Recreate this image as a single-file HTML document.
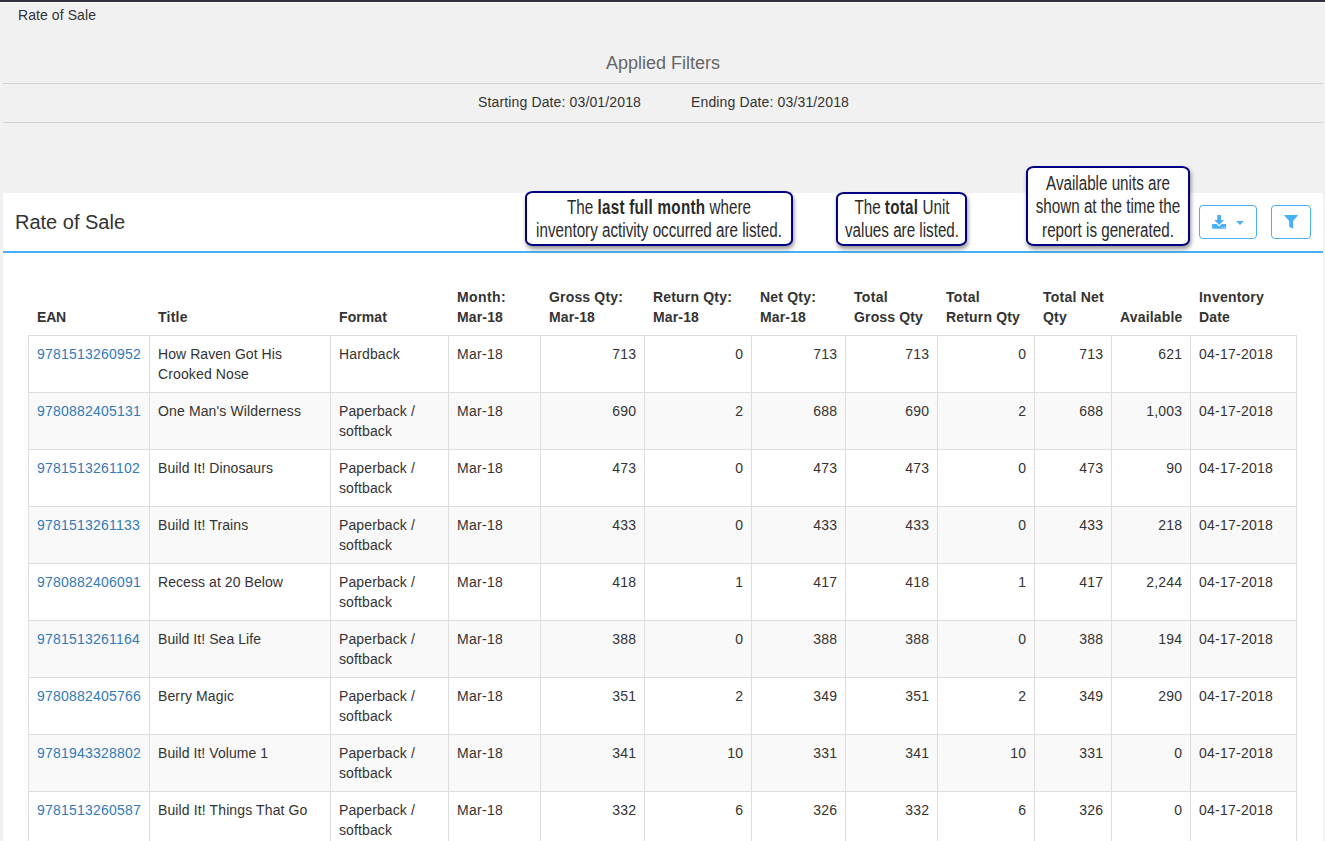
<!DOCTYPE html>
<html><head><meta charset="utf-8">
<style>
*{box-sizing:border-box}
html,body{margin:0;padding:0}
html{width:1325px;height:841px;overflow:hidden}
body{width:1325px;height:841px;overflow:hidden;background:#f1f1f1;font-family:"Liberation Sans",sans-serif;font-size:14px;line-height:20px;color:#333;position:relative}
.topbar{position:absolute;left:0;top:0;width:1325px;height:3px;background:linear-gradient(#30333c 0,#30333c 1px,#30333e 1px,#30333e 2px,#fafafa 2px,#fafafa 3px)}
.crumb{position:absolute;left:18px;top:5px;font-size:14px;line-height:20px;color:#333}
.af{position:absolute;left:3px;width:1320px;top:52px;text-align:center;font-size:18px;line-height:22px;color:#666}
.hl{position:absolute;left:3px;width:1320px;height:1px;background:#d3d3d3}
.dates{position:absolute;top:92px;font-size:14px;line-height:20px;color:#333}
.panel{position:absolute;left:3px;top:193px;width:1320px;height:648px;background:#fff}
.ptitle{position:absolute;left:12px;top:17px;font-size:20px;line-height:24px;color:#333}
.bluel{position:absolute;left:0;top:58px;width:1320px;height:2px;background:#48aef6}
.btn{position:absolute;top:12px;height:34px;border:1px solid #49b0f9;border-radius:4px;background:#fff}
.callout{position:absolute;border:2px solid #000080;border-radius:8px/6px;background:#fff;box-shadow:1px 3px 4px rgba(0,0,0,.42);text-align:center;color:#2a2a2a}
.callout .t{position:absolute;left:50%;top:0;white-space:nowrap;font-size:20px;line-height:23.3px;transform:translateX(-50%) scaleX(.76);transform-origin:center top}
.callout b{font-weight:bold;letter-spacing:.35px}
table{position:absolute;left:28px;top:279px;border-collapse:separate;border-spacing:0;table-layout:fixed;width:1269px}
th{white-space:nowrap;font-weight:bold;text-align:left;vertical-align:bottom;padding:8px 8px 8px 9px;line-height:20px}
td{white-space:nowrap;vertical-align:top;padding:8px 8px 8px 8px;border-left:1px solid #ddd;border-top:1px solid #ddd;line-height:20px}
td.r{text-align:right}
tr.s td{background:#f9f9f9}
td a{color:#337ab7;text-decoration:none}
tbody tr:last-child td{border-bottom:1px solid #ddd}
td:last-child{border-right:1px solid #ddd}
.wrap{position:absolute;left:0;top:0;width:1325px;height:841px;overflow:hidden}

</style></head><body>
<div class="wrap">
<div class="topbar"></div>
<div class="crumb"><span style="letter-spacing:0.079px">Rate of Sale</span></div>
<div class="af"><span style="letter-spacing:-0.003px">Applied Filters</span></div>
<div class="hl" style="top:83px"></div>
<div class="dates" style="left:478px"><span style="letter-spacing:0.138px">Starting Date: 03/01/2018</span></div>
<div class="dates" style="left:691px"><span style="letter-spacing:0.135px">Ending Date: 03/31/2018</span></div>
<div class="hl" style="top:122px"></div>

<div class="panel">
  <div class="ptitle"><span style="letter-spacing:-0.006px">Rate of Sale</span></div>
  <div class="bluel"></div>
  <div class="btn" style="left:1196px;width:58px"></div>
  <div class="btn" style="left:1268px;width:40px"></div>
</div>
<svg class="ico" style="position:absolute;left:0;top:0" width="1325" height="260" viewBox="0 0 1325 260">
  <g fill="#49b0f7">
    <path d="M1217.2 215H1221V220.1H1224L1219.1 225L1214.2 220.1H1217.2Z"/>
    <path d="M1212.1 224.1H1216.6L1219.1 226.6L1221.6 224.1H1226.1V228.8H1212.1Z"/>
    <path d="M1236.1 221.1H1243.9L1240 224.9Z"/>
    <path d="M1283.9 215H1298.3L1293.1 221.1V228.8L1289.2 226.75V221.1Z"/>
  </g>
  <g fill="#c4e0f8"><rect x="1222" y="227" width="1.2" height="1"/><rect x="1224" y="227" width="1.2" height="1"/></g>
</svg>

<div class="callout" style="left:525px;top:191px;width:268px;height:55px"><div class="t" style="top:3px">The <b>last full month</b> where<br>inventory activity occurred are listed.</div></div>
<div class="callout" style="left:836px;top:192px;width:131px;height:54px"><div class="t" style="top:2px">The <b>total</b> Unit<br>values are listed.</div></div>
<div class="callout" style="left:1026px;top:166px;width:164px;height:80px"><div class="t" style="top:4px">Available units are<br>shown at the time the<br>report is generated.</div></div>

<table><colgroup><col style="width:121px"><col style="width:181px"><col style="width:118px"><col style="width:92px"><col style="width:104px"><col style="width:107px"><col style="width:94px"><col style="width:92px"><col style="width:97px"><col style="width:77px"><col style="width:79px"><col style="width:107px"></colgroup><thead><tr><th><span style="letter-spacing:-0.186px">EAN</span></th><th><span style="letter-spacing:0.244px">Title</span></th><th><span style="letter-spacing:0.092px">Format</span></th><th><span style="letter-spacing:0.393px">Month:</span><br><span style="letter-spacing:0.145px">Mar-18</span></th><th><span style="letter-spacing:0.165px">Gross Qty:</span><br><span style="letter-spacing:0.145px">Mar-18</span></th><th><span style="letter-spacing:0.182px">Return Qty:</span><br><span style="letter-spacing:0.145px">Mar-18</span></th><th><span style="letter-spacing:0.194px">Net Qty:</span><br><span style="letter-spacing:0.145px">Mar-18</span></th><th><span style="letter-spacing:0.312px">Total</span><br><span style="letter-spacing:0.146px">Gross Qty</span></th><th><span style="letter-spacing:0.312px">Total</span><br><span style="letter-spacing:0.166px">Return Qty</span></th><th><span style="letter-spacing:0.234px">Total Net</span><br><span style="letter-spacing:0.221px">Qty</span></th><th><span style="letter-spacing:0.169px">Available</span></th><th><span style="letter-spacing:0.221px">Inventory</span><br><span style="letter-spacing:0.164px">Date</span></th></tr></thead><tbody>
<tr><td><a><span style="letter-spacing:0.214px">9781513260952</span></a></td><td><span style="letter-spacing:0.063px">How Raven Got His</span><br><span style="letter-spacing:0.126px">Crooked Nose</span></td><td><span style="letter-spacing:0.135px">Hardback</span></td><td><span style="letter-spacing:0.276px">Mar-18</span></td><td class="r"><span style="letter-spacing:0.214px;margin-right:-0.214px">713</span></td><td class="r"><span style="letter-spacing:0.214px;margin-right:-0.214px">0</span></td><td class="r"><span style="letter-spacing:0.214px;margin-right:-0.214px">713</span></td><td class="r"><span style="letter-spacing:0.214px;margin-right:-0.214px">713</span></td><td class="r"><span style="letter-spacing:0.214px;margin-right:-0.214px">0</span></td><td class="r"><span style="letter-spacing:0.214px;margin-right:-0.214px">713</span></td><td class="r"><span style="letter-spacing:0.214px;margin-right:-0.214px">621</span></td><td><span style="letter-spacing:0.239px">04-17-2018</span></td></tr>
<tr class="s"><td><a><span style="letter-spacing:0.214px">9780882405131</span></a></td><td><span style="letter-spacing:0.131px">One Man&#x27;s Wilderness</span></td><td><span style="letter-spacing:0.117px">Paperback /</span><br><span style="letter-spacing:0.108px">softback</span></td><td><span style="letter-spacing:0.276px">Mar-18</span></td><td class="r"><span style="letter-spacing:0.214px;margin-right:-0.214px">690</span></td><td class="r"><span style="letter-spacing:0.214px;margin-right:-0.214px">2</span></td><td class="r"><span style="letter-spacing:0.214px;margin-right:-0.214px">688</span></td><td class="r"><span style="letter-spacing:0.214px;margin-right:-0.214px">690</span></td><td class="r"><span style="letter-spacing:0.214px;margin-right:-0.214px">2</span></td><td class="r"><span style="letter-spacing:0.214px;margin-right:-0.214px">688</span></td><td class="r"><span style="letter-spacing:0.193px;margin-right:-0.193px">1,003</span></td><td><span style="letter-spacing:0.239px">04-17-2018</span></td></tr>
<tr><td><a><span style="letter-spacing:0.214px">9781513261102</span></a></td><td><span style="letter-spacing:0.073px">Build It! Dinosaurs</span></td><td><span style="letter-spacing:0.117px">Paperback /</span><br><span style="letter-spacing:0.108px">softback</span></td><td><span style="letter-spacing:0.276px">Mar-18</span></td><td class="r"><span style="letter-spacing:0.214px;margin-right:-0.214px">473</span></td><td class="r"><span style="letter-spacing:0.214px;margin-right:-0.214px">0</span></td><td class="r"><span style="letter-spacing:0.214px;margin-right:-0.214px">473</span></td><td class="r"><span style="letter-spacing:0.214px;margin-right:-0.214px">473</span></td><td class="r"><span style="letter-spacing:0.214px;margin-right:-0.214px">0</span></td><td class="r"><span style="letter-spacing:0.214px;margin-right:-0.214px">473</span></td><td class="r"><span style="letter-spacing:0.214px;margin-right:-0.214px">90</span></td><td><span style="letter-spacing:0.239px">04-17-2018</span></td></tr>
<tr class="s"><td><a><span style="letter-spacing:0.214px">9781513261133</span></a></td><td><span style="letter-spacing:0.095px">Build It! Trains</span></td><td><span style="letter-spacing:0.117px">Paperback /</span><br><span style="letter-spacing:0.108px">softback</span></td><td><span style="letter-spacing:0.276px">Mar-18</span></td><td class="r"><span style="letter-spacing:0.214px;margin-right:-0.214px">433</span></td><td class="r"><span style="letter-spacing:0.214px;margin-right:-0.214px">0</span></td><td class="r"><span style="letter-spacing:0.214px;margin-right:-0.214px">433</span></td><td class="r"><span style="letter-spacing:0.214px;margin-right:-0.214px">433</span></td><td class="r"><span style="letter-spacing:0.214px;margin-right:-0.214px">0</span></td><td class="r"><span style="letter-spacing:0.214px;margin-right:-0.214px">433</span></td><td class="r"><span style="letter-spacing:0.214px;margin-right:-0.214px">218</span></td><td><span style="letter-spacing:0.239px">04-17-2018</span></td></tr>
<tr><td><a><span style="letter-spacing:0.214px">9780882406091</span></a></td><td><span style="letter-spacing:0.071px">Recess at 20 Below</span></td><td><span style="letter-spacing:0.117px">Paperback /</span><br><span style="letter-spacing:0.108px">softback</span></td><td><span style="letter-spacing:0.276px">Mar-18</span></td><td class="r"><span style="letter-spacing:0.214px;margin-right:-0.214px">418</span></td><td class="r"><span style="letter-spacing:0.214px;margin-right:-0.214px">1</span></td><td class="r"><span style="letter-spacing:0.214px;margin-right:-0.214px">417</span></td><td class="r"><span style="letter-spacing:0.214px;margin-right:-0.214px">418</span></td><td class="r"><span style="letter-spacing:0.214px;margin-right:-0.214px">1</span></td><td class="r"><span style="letter-spacing:0.214px;margin-right:-0.214px">417</span></td><td class="r"><span style="letter-spacing:0.193px;margin-right:-0.193px">2,244</span></td><td><span style="letter-spacing:0.239px">04-17-2018</span></td></tr>
<tr class="s"><td><a><span style="letter-spacing:0.214px">9781513261164</span></a></td><td><span style="letter-spacing:0.058px">Build It! Sea Life</span></td><td><span style="letter-spacing:0.117px">Paperback /</span><br><span style="letter-spacing:0.108px">softback</span></td><td><span style="letter-spacing:0.276px">Mar-18</span></td><td class="r"><span style="letter-spacing:0.214px;margin-right:-0.214px">388</span></td><td class="r"><span style="letter-spacing:0.214px;margin-right:-0.214px">0</span></td><td class="r"><span style="letter-spacing:0.214px;margin-right:-0.214px">388</span></td><td class="r"><span style="letter-spacing:0.214px;margin-right:-0.214px">388</span></td><td class="r"><span style="letter-spacing:0.214px;margin-right:-0.214px">0</span></td><td class="r"><span style="letter-spacing:0.214px;margin-right:-0.214px">388</span></td><td class="r"><span style="letter-spacing:0.214px;margin-right:-0.214px">194</span></td><td><span style="letter-spacing:0.239px">04-17-2018</span></td></tr>
<tr><td><a><span style="letter-spacing:0.214px">9780882405766</span></a></td><td><span style="letter-spacing:0.120px">Berry Magic</span></td><td><span style="letter-spacing:0.117px">Paperback /</span><br><span style="letter-spacing:0.108px">softback</span></td><td><span style="letter-spacing:0.276px">Mar-18</span></td><td class="r"><span style="letter-spacing:0.214px;margin-right:-0.214px">351</span></td><td class="r"><span style="letter-spacing:0.214px;margin-right:-0.214px">2</span></td><td class="r"><span style="letter-spacing:0.214px;margin-right:-0.214px">349</span></td><td class="r"><span style="letter-spacing:0.214px;margin-right:-0.214px">351</span></td><td class="r"><span style="letter-spacing:0.214px;margin-right:-0.214px">2</span></td><td class="r"><span style="letter-spacing:0.214px;margin-right:-0.214px">349</span></td><td class="r"><span style="letter-spacing:0.214px;margin-right:-0.214px">290</span></td><td><span style="letter-spacing:0.239px">04-17-2018</span></td></tr>
<tr class="s"><td><a><span style="letter-spacing:0.214px">9781943328802</span></a></td><td><span style="letter-spacing:0.071px">Build It! Volume 1</span></td><td><span style="letter-spacing:0.117px">Paperback /</span><br><span style="letter-spacing:0.108px">softback</span></td><td><span style="letter-spacing:0.276px">Mar-18</span></td><td class="r"><span style="letter-spacing:0.214px;margin-right:-0.214px">341</span></td><td class="r"><span style="letter-spacing:0.214px;margin-right:-0.214px">10</span></td><td class="r"><span style="letter-spacing:0.214px;margin-right:-0.214px">331</span></td><td class="r"><span style="letter-spacing:0.214px;margin-right:-0.214px">341</span></td><td class="r"><span style="letter-spacing:0.214px;margin-right:-0.214px">10</span></td><td class="r"><span style="letter-spacing:0.214px;margin-right:-0.214px">331</span></td><td class="r"><span style="letter-spacing:0.214px;margin-right:-0.214px">0</span></td><td><span style="letter-spacing:0.239px">04-17-2018</span></td></tr>
<tr><td><a><span style="letter-spacing:0.214px">9781513260587</span></a></td><td><span style="letter-spacing:0.122px">Build It! Things That Go</span></td><td><span style="letter-spacing:0.117px">Paperback /</span><br><span style="letter-spacing:0.108px">softback</span></td><td><span style="letter-spacing:0.276px">Mar-18</span></td><td class="r"><span style="letter-spacing:0.214px;margin-right:-0.214px">332</span></td><td class="r"><span style="letter-spacing:0.214px;margin-right:-0.214px">6</span></td><td class="r"><span style="letter-spacing:0.214px;margin-right:-0.214px">326</span></td><td class="r"><span style="letter-spacing:0.214px;margin-right:-0.214px">332</span></td><td class="r"><span style="letter-spacing:0.214px;margin-right:-0.214px">6</span></td><td class="r"><span style="letter-spacing:0.214px;margin-right:-0.214px">326</span></td><td class="r"><span style="letter-spacing:0.214px;margin-right:-0.214px">0</span></td><td><span style="letter-spacing:0.239px">04-17-2018</span></td></tr>
</tbody></table>

</div>
</body></html>
